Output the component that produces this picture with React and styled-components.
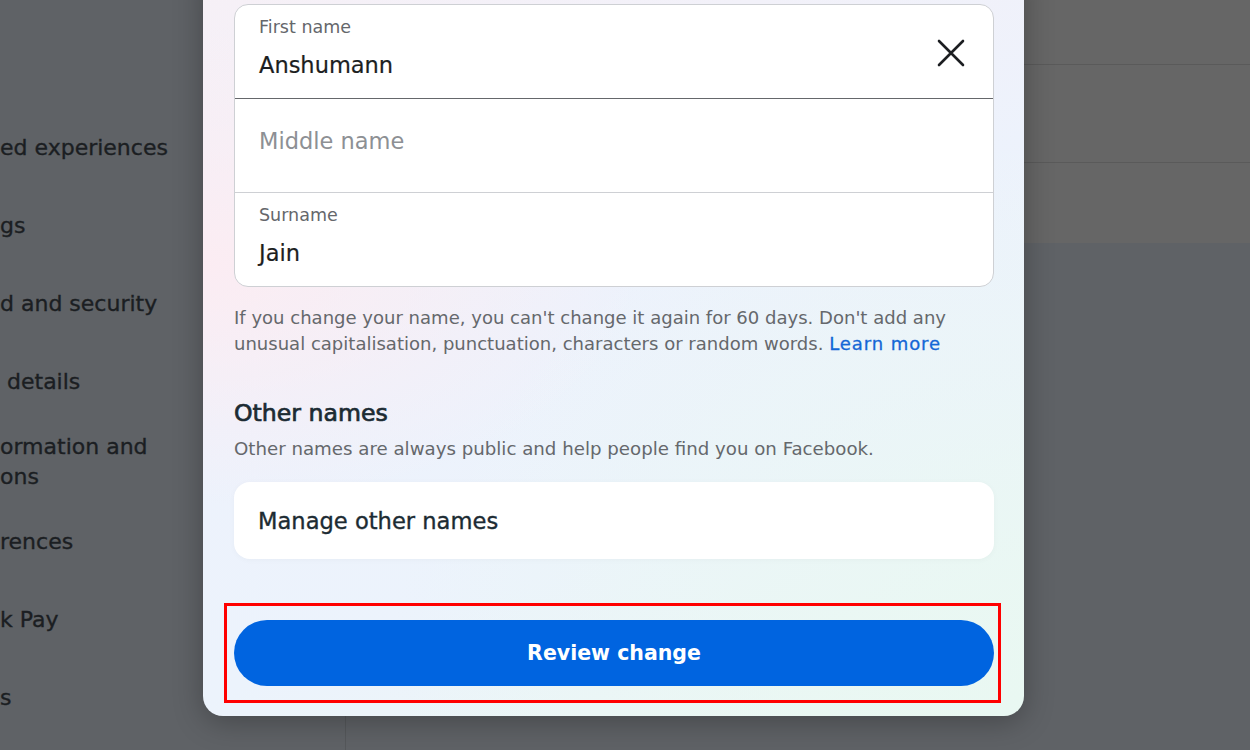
import React from "react";
import styled, { createGlobalStyle } from "styled-components";

const Global = createGlobalStyle`
  html, body { margin: 0; padding: 0; }
  body {
    width: 1250px;
    height: 750px;
    overflow: hidden;
    background: #5f6266;
    font-family: "DejaVu Sans", "Noto Sans", sans-serif;
  }
  * { box-sizing: border-box; }
`;

const Page = styled.div`
  position: relative;
  width: 1250px;
  height: 750px;
  display: flex;
  overflow: hidden;
`;

const Sidebar = styled.nav`
  width: 346px;
  flex: none;
  border-right: 1px solid #55585b;
  padding-top: 109px;
  display: flex;
  flex-direction: column;
  overflow: hidden;
`;

const NavItem = styled.div`
  min-height: ${(p) => (p.$double ? 82 : 78)}px;
  display: flex;
  align-items: center;
  font-size: 22px;
  line-height: 30px;
  color: #1b1e22;
  -webkit-text-stroke: 0.35px #1b1e22;
  white-space: pre;
  padding-left: ${(p) => p.$indent || 0}px;
`;

const Main = styled.main`
  flex: 1;
  display: flex;
  flex-direction: column;
  padding-left: 40px;
`;

const TopCard = styled.section`
  height: 243px;
  background: #666666;
  display: flex;
  flex-direction: column;
`;

const CardRow = styled.div`
  height: ${(p) => p.$h}px;
  border-bottom: ${(p) => (p.$last ? "none" : "1px solid #5a5a5a")};
`;

const Modal = styled.div`
  position: absolute;
  left: 203px;
  top: -36px;
  width: 821px;
  height: 752px;
  border-radius: 20px;
  background:
    radial-gradient(ellipse at 0% 40%, rgba(252, 236, 242, 0.95) 0%, rgba(252, 236, 242, 0) 38%),
    radial-gradient(ellipse at 100% 100%, rgba(233, 248, 242, 1) 0%, rgba(233, 248, 242, 0) 55%),
    linear-gradient(160deg, #f7f0f6 0%, #edf2fc 45%, #ecf3fc 70%, #ecf7f3 100%);
  box-shadow: 0 6px 30px rgba(0, 0, 0, 0.28);
  padding: 40px 30px 13px 31px;
  display: flex;
  flex-direction: column;
`;

const FieldGroup = styled.div`
  background: #ffffff;
  border: 1px solid #ced0d4;
  border-radius: 14px;
  overflow: hidden;
  display: flex;
  flex-direction: column;
`;

const Field = styled.div`
  height: ${(p) => (p.$last ? 93 : 94)}px;
  border-bottom: ${(p) =>
    p.$last ? "none" : p.$focused ? "1px solid #65676b" : "1px solid #ced0d4"};
  padding: ${(p) => (p.$empty ? "27px" : "11px")} 24px 0 24px;
  display: flex;
  align-items: flex-start;
  justify-content: space-between;
`;

const FieldText = styled.div`
  display: flex;
  flex-direction: column;
`;

const Label = styled.span`
  font-size: 17.5px;
  line-height: 22px;
  color: #65676b;
  margin-bottom: 12px;
`;

const Value = styled.span`
  font-size: 22.5px;
  line-height: 30px;
  color: ${(p) => (p.$placeholder ? "#8d9094" : "#1c1e21")};
  -webkit-text-stroke: ${(p) => (p.$placeholder ? "0" : "0.2px #1c1e21")};
`;

const ClearButton = styled.button`
  border: none;
  background: transparent;
  padding: 0;
  margin: 23px 4px 0 0;
  width: 28px;
  height: 28px;
  display: flex;
  align-items: center;
  justify-content: center;
  cursor: pointer;
`;

const Hint = styled.p`
  margin: 18px 0 0 0;
  font-size: 18.05px;
  line-height: 26px;
  color: #65686c;
`;

const Link = styled.a`
  color: #1467d6;
  text-decoration: none;
  letter-spacing: 0.9px;
  -webkit-text-stroke: 0.3px #1467d6;
`;

const SectionTitle = styled.h2`
  margin: 42px 0 0 0;
  font-size: 23.6px;
  line-height: 28px;
  font-weight: 400;
  color: #1c2b33;
  -webkit-text-stroke: 0.7px #1c2b33;
`;

const SectionSub = styled.p`
  margin: 10px 0 0 0;
  font-size: 18.2px;
  line-height: 24px;
  color: #65686c;
`;

const ManageCard = styled.div`
  margin-top: 21px;
  height: 77px;
  background: #ffffff;
  border-radius: 16px;
  box-shadow: 0 1px 6px rgba(0, 0, 0, 0.03);
  display: flex;
  align-items: center;
  padding-left: 24px;
  font-size: 22.6px;
  color: #1c2b33;
  -webkit-text-stroke: 0.35px #1c2b33;
`;

const ButtonFrame = styled.div`
  margin: auto -7px 0 -10px;
  border: 3px solid #ff0000;
  padding: 14px 4px 14px 7px;
`;

const PrimaryButton = styled.button`
  width: 100%;
  height: 66px;
  border: none;
  border-radius: 33px;
  background: #0064e0;
  color: #ffffff;
  font-family: "DejaVu Sans", sans-serif;
  font-size: 20.5px;
  font-weight: 700;
  cursor: pointer;
`;

const CloseIcon = () => (
  <svg width="28" height="28" viewBox="0 0 28 28" fill="none">
    <path
      d="M2 2 L26 26 M26 2 L2 26"
      stroke="#1c1e21"
      strokeWidth="2.6"
      strokeLinecap="round"
    />
  </svg>
);

const navItems = [
  { t: "ed experiences" },
  { t: "gs" },
  { t: "d and security" },
  { t: "details", indent: 7 },
  { t: "ormation and\nons", double: true },
  { t: "rences" },
  { t: "k Pay" },
  { t: "s" },
];

export default function App() {
  return (
    <>
      <Global />
      <Page>
        <Sidebar>
          {navItems.map((n, i) => (
            <NavItem key={i} $indent={n.indent} $double={n.double}>
              {n.t}
            </NavItem>
          ))}
        </Sidebar>
        <Main>
          <TopCard>
            <CardRow $h={65} />
            <CardRow $h={98} />
            <CardRow $h={80} $last />
          </TopCard>
        </Main>
        <Modal>
          <FieldGroup>
            <Field $focused>
              <FieldText>
                <Label>First name</Label>
                <Value>Anshumann</Value>
              </FieldText>
              <ClearButton aria-label="Clear">
                <CloseIcon />
              </ClearButton>
            </Field>
            <Field $empty>
              <Value $placeholder>Middle name</Value>
            </Field>
            <Field $last>
              <FieldText>
                <Label>Surname</Label>
                <Value>Jain</Value>
              </FieldText>
            </Field>
          </FieldGroup>
          <Hint>
            If you change your name, you can't change it again for 60 days. Don't add any
            unusual capitalisation, punctuation, characters or random words.{" "}
            <Link href="#">Learn more</Link>
          </Hint>
          <SectionTitle>Other names</SectionTitle>
          <SectionSub>
            Other names are always public and help people find you on Facebook.
          </SectionSub>
          <ManageCard>Manage other names</ManageCard>
          <ButtonFrame>
            <PrimaryButton>Review change</PrimaryButton>
          </ButtonFrame>
        </Modal>
      </Page>
    </>
  );
}
